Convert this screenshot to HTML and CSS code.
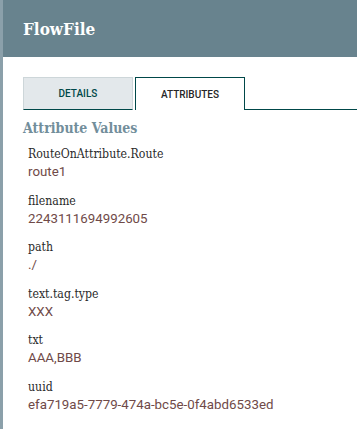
FILE: index.html
```html
<!DOCTYPE html>
<html>
<head>
<meta charset="utf-8">
<link rel="stylesheet" href="styles.css">
</head>
<body>
<div class="dialog">
  <div class="header"><span class="title">FlowFile</span></div>
  <div class="content">
    <div class="tabs">
      <div class="tab tab-inactive">DETAILS</div>
      <div class="tab tab-active">ATTRIBUTES</div>
      <div class="tab-rest"></div>
    </div>
    <div class="section-title">Attribute Values</div>
    <div class="attrs">
      <div class="attr"><div class="name">RouteOnAttribute.Route</div><div class="value">route1</div></div>
      <div class="attr"><div class="name">filename</div><div class="value">2243111694992605</div></div>
      <div class="attr"><div class="name">path</div><div class="value">./</div></div>
      <div class="attr"><div class="name">text.tag.type</div><div class="value">XXX</div></div>
      <div class="attr"><div class="name">txt</div><div class="value">AAA,BBB</div></div>
      <div class="attr"><div class="name">uuid</div><div class="value">efa719a5-7779-474a-bc5e-0f4abd6533ed</div></div>
    </div>
  </div>
</div>
</body>
</html>
```
FILE: styles.css
```css
html, body { margin: 0; padding: 0; background: #fff; }
body { font-family: Roboto, "Liberation Sans", sans-serif; }
.dialog {
  border-left: 3px solid #8ba0aa;
  min-height: 429px;
  box-sizing: border-box;
}
.header {
  background: #68838e;
  height: 57px;
  display: flex;
  align-items: center;
  padding-left: 20px;
  padding-top: 1px;
  box-sizing: border-box;
}
.title {
  color: #fff;
  font-family: "DejaVu Serif Condensed", "DejaVu Serif", serif;
  font-weight: bold;
  font-size: 17px;
}
.content { padding: 20px 0 0 20px; }
.tabs { display: flex; align-items: flex-end; height: 33px; }
.tab {
  width: 110px;
  box-sizing: border-box;
  display: flex;
  align-items: center;
  justify-content: center;
  font-size: 10px;
  font-weight: 500;
}
.tab-inactive {
  background: #e3e8eb;
  border: 1px solid #cdd6d9;
  border-bottom: 1px solid #004849;
  color: #004849;
  height: 33px;
}
.tab-active {
  margin-left: 2px;
  border: 1px solid #004849;
  border-bottom: none;
  color: #262626;
  height: 33px;
}
.tab-rest { flex: 1; border-bottom: 1px solid #004849; height: 0; }
.section-title {
  margin-top: 10px;
  font-family: "DejaVu Serif Condensed", "DejaVu Serif", serif;
  font-weight: bold;
  font-size: 14px;
  color: #728e9b;
}
.attrs { padding: 9px 0 0 5px; display: flex; flex-direction: column; gap: 11.6px; }
.attr { display: flex; flex-direction: column; }
.name {
  font-family: "DejaVu Serif Condensed", "DejaVu Serif", serif;
  font-size: 12.2px;
  color: #2a2a2a;
  line-height: 18px;
}
.value {
  font-size: 13.3px;
  color: #6f4a48;
  line-height: 17px;
}
```
